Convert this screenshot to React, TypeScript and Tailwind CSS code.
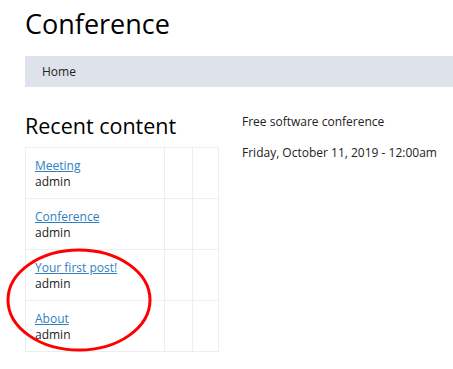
import React from "react";

const rows = ["Meeting", "Conference", "Your first post!", "About"];

export default function App() {
  return (
    <div className="relative w-[453px] h-[369px] bg-white overflow-hidden text-[#222]" style={{ fontFamily: '"Open Sans", sans-serif' }}>
      <div className="pl-[25px]">
        <h1 className="text-[27px] leading-[36px] pt-[6px] text-black">Conference</h1>
        <nav className="mt-[14px] h-[31px] bg-[#dee2ea] flex items-center pl-[17px] text-[12px] text-[#222]">Home</nav>
        <div className="flex mt-[24px]">
          <div className="w-[194px] shrink-0">
            <h2 className="text-[21.5px] leading-[30px] text-black">Recent content</h2>
            <table className="mt-[6px] w-[194px] border-collapse text-[12px] leading-[16px]">
              <tbody>
                {rows.map((r) => (
                  <tr key={r}>
                    <td className="border border-[#eceef3] pl-[9px] pt-[10px] pb-[8px] w-[139px]">
                      <a href="#" className="text-[#2f7fc1] underline">{r}</a>
                      <div className="text-[#222]">admin</div>
                    </td>
                    <td className="border border-[#eceef3] w-[28px]"></td>
                    <td className="border border-[#eceef3]"></td>
                  </tr>
                ))}
              </tbody>
            </table>
          </div>
          <div className="ml-[23px] pt-[2px] text-[12px] leading-[18px] text-[#222] whitespace-nowrap">
            <p>Free software conference</p>
            <p className="mt-[13px]">Friday, October 11, 2019 - 12:00am</p>
          </div>
        </div>
      </div>
      <svg className="absolute left-0 top-0" width="453" height="369">
        <ellipse cx="79" cy="300" rx="71" ry="50" fill="none" stroke="#ff0000" strokeWidth="3" />
      </svg>
    </div>
  );
}
